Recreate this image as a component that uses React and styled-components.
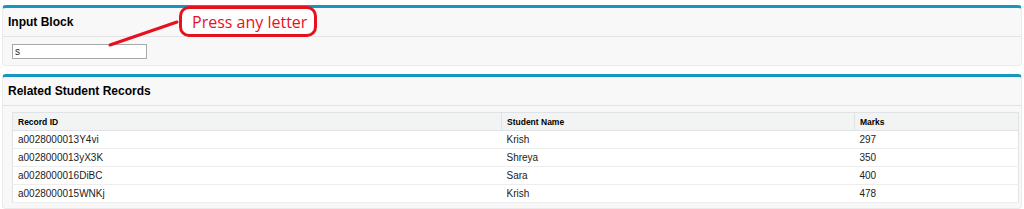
import styled, { createGlobalStyle } from 'styled-components';

const GlobalStyle = createGlobalStyle`
  body {
    margin: 5px 2px 0 2px;
    background: #ffffff;
    font-family: Arial, "Liberation Sans", Helvetica, sans-serif;
    color: #222;
  }
`;

const records = [
  { id: 'a0028000013Y4vi', name: 'Krish', marks: 297 },
  { id: 'a0028000013yX3K', name: 'Shreya', marks: 350 },
  { id: 'a0028000016DiBC', name: 'Sara', marks: 400 },
  { id: 'a0028000015WNKj', name: 'Krish', marks: 478 },
];

function App() {
  return (
    <>
      <GlobalStyle />
      <StPage>
        <StBlock>
          <StHeader>
            <StTitle>Input Block</StTitle>
          </StHeader>
          <StInputBody>
            <StInput defaultValue="s" />
          </StInputBody>
          <StCallout>
            <StArrow viewBox="0 0 80 30">
              <line x1="3" y1="27" x2="70" y2="4" stroke="#e8101c" strokeWidth="3" strokeLinecap="round" />
            </StArrow>
            <StCalloutBox>Press any letter</StCalloutBox>
          </StCallout>
        </StBlock>

        <StBlock>
          <StHeader>
            <StTitle>Related Student Records</StTitle>
          </StHeader>
          <StTableBody>
            <StTable>
              <colgroup>
                <col style={{ width: '489px' }} />
                <col style={{ width: '353px' }} />
                <col />
              </colgroup>
              <thead>
                <tr>
                  <StTh>Record ID</StTh>
                  <StTh>Student Name</StTh>
                  <StTh>Marks</StTh>
                </tr>
              </thead>
              <tbody>
                {records.map((r) => (
                  <tr key={r.id}>
                    <StTd>{r.id}</StTd>
                    <StTd>{r.name}</StTd>
                    <StTd>{r.marks}</StTd>
                  </tr>
                ))}
              </tbody>
            </StTable>
          </StTableBody>
        </StBlock>
      </StPage>
    </>
  );
}

export default App;

const StPage = styled.div`
  display: flex;
  flex-direction: column;
  gap: 8px;
`;

const StBlock = styled.div`
  position: relative;
  background: #f8f8f8;
  border: 1px solid #eaeaea;
  border-top: 3px solid #1797c0;
  border-radius: 4px;
`;

const StHeader = styled.div`
  height: 28px;
  display: flex;
  align-items: center;
  padding: 0 5px;
  border-bottom: 1px solid #e3e3e3;
`;

const StTitle = styled.h2`
  margin: 0;
  font-size: 12px;
  font-weight: bold;
  color: #000;
`;

const StInputBody = styled.div`
  padding: 7px 9px 6px 9px;
`;

const StInput = styled.input`
  display: block;
  box-sizing: border-box;
  width: 135px;
  height: 15px;
  margin: 0;
  padding: 0 2px;
  border: 1px solid #a9a9a9;
  background: #fff;
  font-family: Arial, "Liberation Sans", sans-serif;
  font-size: 10px;
  color: #222;
  outline: none;
`;

const StCallout = styled.div`
  position: absolute;
  left: 104px;
  top: -2px;
  display: flex;
  align-items: flex-start;
`;

const StArrow = styled.svg`
  width: 80px;
  height: 30px;
  margin-top: 12px;
  margin-right: -8px;
`;

const StCalloutBox = styled.div`
  box-sizing: border-box;
  height: 31px;
  padding: 0 7px 0 10px;
  display: flex;
  align-items: center;
  border: 3px solid #e8101c;
  border-radius: 10px;
  background: #fff;
  font-family: "Open Sans", "Noto Sans", sans-serif;
  font-size: 16px;
  color: #e8101c;
  white-space: nowrap;
`;

const StTableBody = styled.div`
  padding: 6px 2px 5px 9px;
`;

const StTable = styled.table`
  width: 100%;
  table-layout: fixed;
  border-collapse: collapse;
  background: #fff;
  border: 1px solid #e0e3e5;
`;

const StTh = styled.th`
  height: 17px;
  padding: 0 5px;
  text-align: left;
  font-size: 8.5px;
  font-weight: bold;
  color: #000;
  background: #f2f3f3;
  border: 1px solid #e0e3e5;
  border-top: none;
`;

const StTd = styled.td`
  height: 17px;
  padding: 0 5px;
  font-size: 10px;
  color: #222;
  border-bottom: 1px solid #ededed;
`;
